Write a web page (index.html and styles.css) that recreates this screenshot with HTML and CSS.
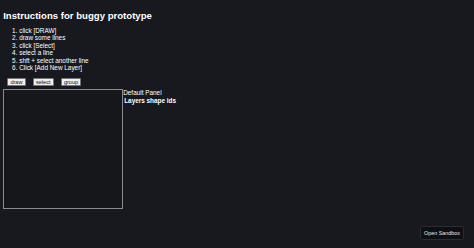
FILE: index.html
```html
<!DOCTYPE html>
<html>
<head>
<meta charset="utf-8">
<link rel="stylesheet" href="styles.css">
</head>
<body>
<h1 class="title">Instructions for buggy prototype</h1>
<ol class="steps">
  <li>click [DRAW]</li>
  <li>draw some lines</li>
  <li>click [Select]</li>
  <li>select a line</li>
  <li>shft + select another line</li>
  <li>Click [Add New Layer]</li>
</ol>
<div class="toolbar">
  <button class="btn">draw</button>
  <button class="btn">select</button>
  <button class="btn">group</button>
</div>
<div class="workspace">
  <div class="canvas"></div>
  <div class="panel">
    <div class="panel-name">Default Panel</div>
    <div class="panel-head">Layers shape ids</div>
  </div>
</div>
<a class="sandbox">Open Sandbox</a>
</body>
</html>
```
FILE: styles.css
```css
html, body {
  background: #17191e;
}
body {
  margin: 3.2px;
  color: #ffffff;
  font-family: "Liberation Sans", Arial, sans-serif;
  font-size: 6.4px;
  line-height: 1.15;
}
.title {
  font-size: 9.6px;
  font-weight: bold;
  margin: 6.4px 0;
  line-height: 11px;
}
.steps {
  margin: 6.4px 0 6.4px 0;
  padding-left: 16px;
}
.steps li {
  line-height: 7.4px;
}
.toolbar {
  display: flex;
  gap: 7px;
  padding-left: 4px;
  margin-top: 0.6px;
  margin-bottom: 2.6px;
}
.btn {
  font-family: "Liberation Sans", Arial, sans-serif;
  font-size: 5.6px;
  line-height: 6px;
  height: 8.6px;
  padding: 0 2.2px;
  margin: 0;
  background: #efefef;
  color: #111;
  border: 0.8px solid #767676;
  border-radius: 1px;
}
.workspace {
  display: flex;
  align-items: flex-start;
}
.canvas {
  width: 118px;
  height: 118px;
  border: 1px solid #8a8c90;
  background: #15171b;
}
.panel-name {
  line-height: 7.4px;
}
.panel-head {
  font-weight: bold;
  line-height: 7.4px;
  margin-top: 0.5px;
  padding-left: 1px;
}
.sandbox {
  position: fixed;
  right: 10px;
  bottom: 8px;
  background: #0e0f12;
  color: #e6e6e6;
  font-size: 5.4px;
  line-height: 6px;
  padding: 3px 3px;
  border: 0.5px solid #2a2c30;
  border-radius: 2px;
}
```
